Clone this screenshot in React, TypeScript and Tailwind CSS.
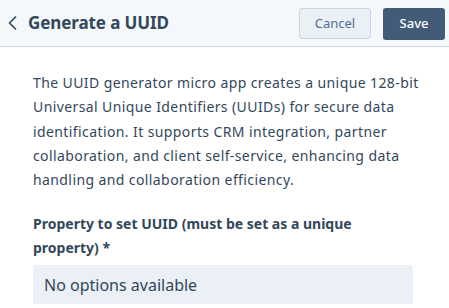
import React from "react";

export default function App() {
  return (
    <div className="w-[449px] h-[308px] overflow-hidden bg-white text-[#33475b]" style={{ fontFamily: '"Noto Sans", "Liberation Sans", sans-serif' }}>
      <div className="h-[47px] bg-[#f5f8fa] border-b border-[#cbd6e2] flex items-center justify-between pl-[7px] pr-[4px]">
        <div className="flex items-center gap-[9px]">
          <svg width="12" height="14" viewBox="0 0 12 14" fill="none">
            <path d="M8.5 1 L2.5 7 L8.5 13" stroke="#33475b" strokeWidth="1.7" strokeLinecap="round" strokeLinejoin="round" />
          </svg>
          <span className="text-[17px] font-bold text-[#33475b] tracking-[-0.1px]">Generate a UUID</span>
        </div>
        <div className="flex items-center gap-[12px] pt-[1px]">
          <button className="w-[72px] h-[31px] rounded-[3px] bg-[#eaf0f6] border border-[#cbd6e2] text-[#506e91] text-[13px]">Cancel</button>
          <button className="w-[62px] h-[32px] rounded-[3px] bg-[#425b76] text-white text-[13px] font-medium">Save</button>
        </div>
      </div>
      <div className="pl-[33px] pr-[20px] pt-[24px]">
        <p className="text-[14px] leading-[24.3px] text-[#33475b] tracking-[0.4px]">
          The UUID generator micro app creates a unique 128-bit<br />
          Universal Unique Identifiers (UUIDs) for secure data<br />
          identification. It supports CRM integration, partner<br />
          collaboration, and client self-service, enhancing data<br />
          handling and collaboration efficiency.
        </p>
        <div className="mt-[20px] text-[14px] font-bold leading-[24px] text-[#33475b]">
          Property to set UUID (must be set as a unique<br />property) *
        </div>
        <div className="mt-[5px] w-[380px] h-[39px] rounded-[3px] bg-[#eaf0f6] flex items-center pl-[11px] text-[16px] text-[#33475b]">
          No options available
        </div>
      </div>
    </div>
  );
}
